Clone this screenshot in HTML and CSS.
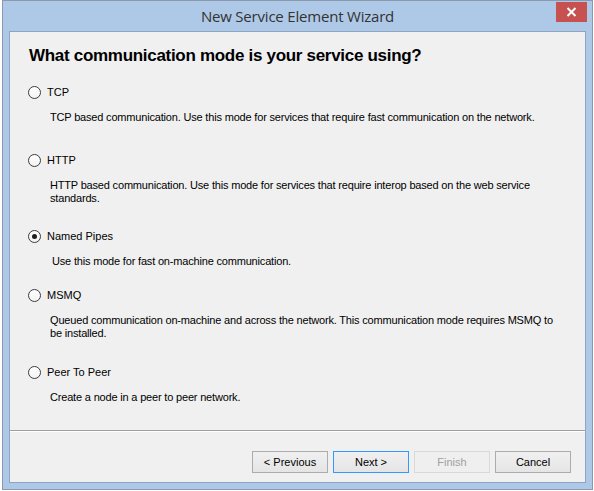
FILE: index.html
```html
<!DOCTYPE html>
<html>
<head>
<meta charset="utf-8">
<link rel="stylesheet" href="styles.css">
</head>
<body>
<div class="window">
  <div class="titlebar">
    <span class="title">New Service Element Wizard</span>
    <div class="close">
      <svg width="11" height="10" viewBox="0 0 11 10"><path d="M1.5 1 L9.5 9 M9.5 1 L1.5 9" stroke="#fff" stroke-width="2" fill="none"/></svg>
    </div>
  </div>
  <div class="client">
    <div class="content">
      <h1 class="heading">What communication mode is your service using?</h1>
      <div class="option opt-tcp">
        <div class="row"><span class="radio"></span><span class="label">TCP</span></div>
        <p class="desc">TCP based communication. Use this mode for services that require fast communication on the network.</p>
      </div>
      <div class="option opt-http">
        <div class="row"><span class="radio"></span><span class="label">HTTP</span></div>
        <p class="desc">HTTP based communication. Use this mode for services that require interop based on the web service<br>standards.</p>
      </div>
      <div class="option opt-pipes">
        <div class="row"><span class="radio checked"></span><span class="label">Named Pipes</span></div>
        <p class="desc desc-pipes">Use this mode for fast on-machine communication.</p>
      </div>
      <div class="option opt-msmq">
        <div class="row"><span class="radio"></span><span class="label">MSMQ</span></div>
        <p class="desc">Queued communication on-machine and across the network. This communication mode requires MSMQ to<br>be installed.</p>
      </div>
      <div class="option opt-peer">
        <div class="row"><span class="radio"></span><span class="label">Peer To Peer</span></div>
        <p class="desc">Create a node in a peer to peer network.</p>
      </div>
    </div>
    <div class="separator"></div>
    <div class="footer">
      <button class="btn">&lt; Previous</button>
      <button class="btn btn-default">Next &gt;</button>
      <button class="btn btn-disabled">Finish</button>
      <button class="btn">Cancel</button>
    </div>
  </div>
</div>
</body>
</html>
```
FILE: styles.css
```css
html, body {
  margin: 0;
  padding: 0;
  background: #ffffff;
}
body {
  width: 594px;
  height: 491px;
  overflow: hidden;
  font-family: "Liberation Sans", Arial, sans-serif;
}
.window {
  position: relative;
  box-sizing: border-box;
  margin-left: 2px;
  width: 591px;
  height: 490px;
  border: 1px solid #8a99ab;
  background: #aec9e7;
  padding: 0 6px 6px 6px;
}
.titlebar {
  height: 30px;
  display: flex;
  align-items: center;
  justify-content: center;
}
.title {
  font-family: "Open Sans", "Noto Sans", sans-serif;
  font-size: 15px;
  letter-spacing: -0.2px;
  color: #333333;
  margin-top: -1px;
}
.close {
  position: absolute;
  top: 1px;
  right: 5px;
  width: 31px;
  height: 20px;
  background: #c75050;
  display: flex;
  align-items: center;
  justify-content: center;
}
.client {
  box-sizing: border-box;
  height: 452px;
  border: 1px solid #8ea5c2;
  background: #f0f0f0;
  display: flex;
  flex-direction: column;
}
.content {
  height: 398px;
  padding-top: 13px;
  box-sizing: border-box;
}
.heading {
  margin: 0 0 0 19px;
  font-size: 17px;
  letter-spacing: -0.3px;
  line-height: 22px;
  font-weight: bold;
  color: #000;
}
.option {
  font-size: 11px;
  color: #000;
}
.opt-tcp { margin-top: 18px; }
.opt-http { margin-top: 29px; }
.opt-pipes { margin-top: 24px; }
.opt-msmq { margin-top: 20px; }
.opt-peer { margin-top: 25px; }
.row {
  display: flex;
  align-items: center;
  height: 14px;
  padding-left: 18px;
}
.radio {
  box-sizing: border-box;
  width: 13px;
  height: 13px;
  border-radius: 50%;
  border: 1px solid #3c3c3c;
  background: linear-gradient(#ffffff, #f3f3f3);
  display: flex;
  align-items: center;
  justify-content: center;
}
.radio.checked::after {
  content: "";
  width: 5px;
  height: 5px;
  border-radius: 50%;
  background: #1f1f1f;
}
.label {
  margin-left: 6px;
  line-height: 14px;
}
.desc {
  margin: 12px 0 0 40px;
  line-height: 13px;
  letter-spacing: -0.18px;
}
.desc-pipes {
  margin-left: 42px;
}
.separator {
  height: 0;
  border-top: 1px solid #a0a0a0;
  border-bottom: 1px solid #ffffff;
}
.footer {
  flex: 1;
  display: flex;
  justify-content: flex-end;
  align-items: flex-start;
  gap: 5px;
  padding: 19px 14px 0 0;
}
.btn {
  box-sizing: border-box;
  width: 76px;
  height: 22px;
  margin: 0;
  padding: 0;
  border: 1px solid #acacac;
  background: linear-gradient(#f0f0f0, #e5e5e5);
  font-family: "Liberation Sans", Arial, sans-serif;
  font-size: 11px;
  color: #000;
}
.btn-default {
  border-color: #3399ff;
}
.btn-disabled {
  border-color: #d9d9d9;
  background: #efefef;
  color: #a0a0a0;
}
```
